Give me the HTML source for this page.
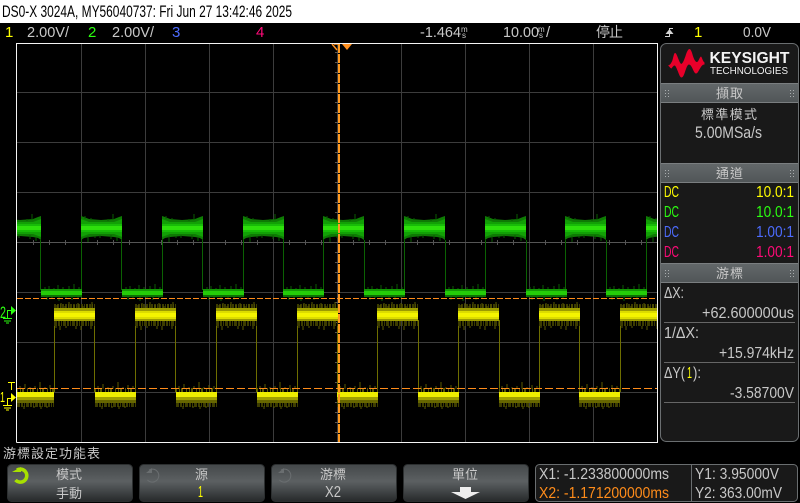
<!DOCTYPE html>
<html><head><meta charset="utf-8"><style>
html,body{margin:0;padding:0;background:#000;width:800px;height:503px;overflow:hidden}
svg{display:block}
text{font-family:"Liberation Sans","WenQuanYi Zen Hei","Noto Sans CJK TC",sans-serif;fill:#c8c8c8}
.cjk{font-family:"WenQuanYi Zen Hei","Noto Sans CJK TC",sans-serif}
</style></head><body>
<svg width="800" height="503" viewBox="0 0 800 503" xmlns="http://www.w3.org/2000/svg">
<defs>
<linearGradient id="hd" x1="0" y1="0" x2="0" y2="1"><stop offset="0" stop-color="#63686a"/><stop offset="1" stop-color="#505557"/></linearGradient>
<linearGradient id="btn" x1="0" y1="0" x2="0" y2="1"><stop offset="0" stop-color="#44484a"/><stop offset=".45" stop-color="#5c6062"/><stop offset=".62" stop-color="#4c5052"/><stop offset="1" stop-color="#26292a"/></linearGradient>
<g id="g2h">
<path d="M0 -12L3 -11L8 -9L20 -8L33 -9L38 -11L41 -12V12L38 10L33 9L20 8L8 9L3 10L0 12Z" fill="#0e7a04"/>
<path d="M0 -9L8 -6L20 -6L33 -6L41 -9V9L33 6L20 6L8 6L0 9Z" fill="#12a006"/>
<path d="M0 -4H41V4H0Z" fill="#18bc08"/>
<rect x="0" y="-2" width="41" height="4" fill="#2ee00c"/>
<path d="M4 -9V-12M10 -8V-10M27 -7V-9M32 -8V-14M7 8V14M14 8V10M19 7V10M30 7V11M36 9V13" stroke="#0a5c02" stroke-width="1"/>
</g>
<g id="g2l">
<rect x="0" y="-2" width="41" height="2" fill="#129604"/>
<rect x="0" y="0" width="41" height="4" fill="#24cc08"/>
<rect x="0" y="4" width="41" height="2" fill="#0c7003"/>
<path d="M4 -2V-4M8 -2V-5M13 -2V-3M17 -2V-6M22 -2V-4M28 -2V-5M33 -2V-7M38 -2V-4M6 6V9M11 6V8M18 6V10M25 6V8M31 6V9M37 6V7" stroke="#0b5a03" stroke-width="1"/>
</g>
<g id="y1h">
<path d="M0 -7H41" stroke="#3c3c00" stroke-width="4" stroke-dasharray="2 1 2 1 1 1"/>
<path d="M0 10H41" stroke="#3c3c00" stroke-width="6" stroke-dasharray="3 1 2 1 1 1"/>
<rect x="0" y="-5" width="41" height="13" fill="#9c9c00"/>
<rect x="0" y="-2" width="41" height="8" fill="#dcdc00"/>
<rect x="0" y="0" width="41" height="4" fill="#f4f400"/>
<path d="M3 -5V-8M7 -5V-10M11 -5V-7M15 -5V-11M20 -5V-8M24 -5V-10M29 -5V-7M33 -5V-9M38 -5V-11M2 13V15M6 13V17M12 13V15M22 13V16M27 13V17M37 13V16" stroke="#5a5a00" stroke-width="1"/>
</g>
<g id="y1l">
<path d="M0 -2H41" stroke="#5a5a00" stroke-width="4" stroke-dasharray="1 2 1 1 2 3"/>
<rect x="0" y="0" width="41" height="5" fill="#eeee00"/>
<rect x="0" y="5" width="41" height="3" fill="#a0a000"/>
<rect x="0" y="8" width="41" height="3" fill="#666600"/>
<path d="M0 13H41" stroke="#3e3e00" stroke-width="4" stroke-dasharray="3 1 2 1 1 1"/>
<path d="M3 -3V-6M8 -3V-8M13 -3V-5M18 -3V-6M23 -3V-10M28 -3V-5M33 -3V-7M38 -3V-6M7 14V17M17 14V16M24 14V17M30 14V16" stroke="#5a5a00" stroke-width="1"/>
</g>
</defs>

<rect width="800" height="503" fill="#000"/>
<rect width="800" height="23" fill="#fff"/>
<text x="2" y="17" font-size="17" textLength="290" lengthAdjust="spacingAndGlyphs" style="fill:#000">DS0-X 3024A, MY56040737: Fri Jun 27 13:42:46 2025</text>

<!-- status row -->
<g font-size="15">
<text x="5" y="37" style="fill:#ffff00">1</text>
<text x="27" y="37" textLength="42" lengthAdjust="spacingAndGlyphs">2.00V/</text>
<text x="88" y="37" style="fill:#2cff10">2</text>
<text x="112" y="37" textLength="42" lengthAdjust="spacingAndGlyphs">2.00V/</text>
<text x="172" y="37" style="fill:#4d6cff">3</text>
<text x="256" y="37" style="fill:#ff0a78">4</text>
<text x="420" y="37" textLength="41" lengthAdjust="spacingAndGlyphs">-1.464</text>
<text x="503" y="37" textLength="36" lengthAdjust="spacingAndGlyphs">10.00</text>
<text x="546" y="37">/</text>
<text x="743" y="37" textLength="28" lengthAdjust="spacingAndGlyphs">0.0V</text>
<text x="694" y="37" style="fill:#ffff00">1</text>
<text class="cjk" x="596" y="37" font-size="14" textLength="27">停止</text>
</g>
<g font-size="8">
<text x="461" y="32">m</text><text x="462" y="38">s</text>
<text x="538" y="32">m</text><text x="539" y="38">s</text>
</g>
<path d="M665 36.500H669.500V28.500H673" stroke="#d4d4d4" stroke-width="1" fill="none"/>
<path d="M669.500 29L673.500 34H665.500Z" fill="#d4d4d4"/>

<!-- graticule -->
<g stroke="#3c3c3c" stroke-width="1" shape-rendering="crispEdges">
<path d="M81.500 44V442M145.500 44V442M209.500 44V442M273.500 44V442M337.500 44V442M401.500 44V442M465.500 44V442M529.500 44V442M593.500 44V442"/>
<path d="M17 92.500H657M17 142.500H657M17 192.500H657M17 292.500H657M17 342.500H657M17 392.500H657"/>
<path stroke="#555" d="M17 242.500H657"/>
<path stroke="#555" d="M33.500 240V245M49.500 240V245M65.500 240V245M97.500 240V245M113.500 240V245M129.500 240V245M161.500 240V245M177.500 240V245M193.500 240V245M225.500 240V245M241.500 240V245M257.500 240V245M289.500 240V245M305.500 240V245M321.500 240V245M353.500 240V245M369.500 240V245M385.500 240V245M417.500 240V245M433.500 240V245M449.500 240V245M481.500 240V245M497.500 240V245M513.500 240V245M545.500 240V245M561.500 240V245M577.500 240V245M609.500 240V245M625.500 240V245M641.500 240V245"/>
<path stroke="#555" d="M335 52.500H340M335 62.500H340M335 72.500H340M335 82.500H340M335 102.500H340M335 112.500H340M335 122.500H340M335 132.500H340M335 152.500H340M335 162.500H340M335 172.500H340M335 182.500H340M335 202.500H340M335 212.500H340M335 222.500H340M335 232.500H340M335 252.500H340M335 262.500H340M335 272.500H340M335 282.500H340M335 302.500H340M335 312.500H340M335 322.500H340M335 332.500H340M335 352.500H340M335 362.500H340M335 372.500H340M335 382.500H340M335 402.500H340M335 412.500H340M335 422.500H340M335 432.500H340"/>
</g>

<!-- ch2 edges -->
<path d="M40.500 240V290M81.500 290V240M121.500 240V290M162.500 290V240M202.500 240V290M243.500 290V240M283.500 240V290M323.500 290V240M364.500 240V290M404.500 290V240M445.500 240V290M485.500 290V240M526.500 240V290M565.500 290V240M606.500 240V290M646.500 290V240" stroke="#0b6203" stroke-width="1"/>
<!-- ch2 -->
<svg x="17" y="200" width="24" height="60" viewBox="17 0 24 60"><use href="#g2h" x="0" y="28"/></svg>
<use href="#g2h" x="81" y="228"/><use href="#g2h" x="162" y="228"/><use href="#g2h" x="243" y="228"/><use href="#g2h" x="323" y="228"/><use href="#g2h" x="404" y="228"/><use href="#g2h" x="485" y="228"/><use href="#g2h" x="565" y="228"/>
<svg x="646" y="200" width="11" height="60" viewBox="0 0 11 60"><use href="#g2h" x="0" y="28"/></svg>
<use href="#g2l" x="41" y="291"/><use href="#g2l" x="122" y="291" /><use href="#g2l" x="203" y="291"/><use href="#g2l" x="283" y="291"/><use href="#g2l" x="364" y="291"/><use href="#g2l" x="445" y="291"/><use href="#g2l" x="526" y="291"/><use href="#g2l" x="606" y="291"/>

<!-- ch1 edges -->
<path d="M54.500 320V392M94.500 320V392M135.500 320V392M175.500 320V392M216.500 320V392M256.500 320V392M297.500 320V392M337.500 320V392M377.500 320V392M418.500 320V392M458.500 320V392M499.500 320V392M539.500 320V392M579.500 320V392M620.500 320V392" stroke="#6e6e00" stroke-width="1"/>
<!-- ch1 -->
<use href="#y1h" x="54" y="313"/><use href="#y1h" x="135" y="313"/><use href="#y1h" x="216" y="313"/><use href="#y1h" x="297" y="313"/><use href="#y1h" x="377" y="313"/><use href="#y1h" x="458" y="313"/><use href="#y1h" x="539" y="313"/>
<svg x="620" y="295" width="37" height="40" viewBox="0 0 37 40"><use href="#y1h" x="0" y="18"/></svg>
<svg x="17" y="375" width="37" height="40" viewBox="0 0 37 40"><use href="#y1l" x="0" y="17"/></svg>
<use href="#y1l" x="95" y="392"/><use href="#y1l" x="176" y="392"/><use href="#y1l" x="257" y="392"/><use href="#y1l" x="337" y="392"/><use href="#y1l" x="418" y="392"/><use href="#y1l" x="499" y="392"/><use href="#y1l" x="579" y="392"/>

<!-- cursors -->
<path d="M17 298.500H657" stroke="#ff8c1a" stroke-width="1" stroke-dasharray="6 2" shape-rendering="crispEdges"/>
<path d="M17 388.500H657" stroke="#ff8c1a" stroke-width="1" stroke-dasharray="8 3" shape-rendering="crispEdges"/>
<path d="M339 44V442" stroke="#ff9a20" stroke-width="2" stroke-dasharray="9 1" shape-rendering="crispEdges"/>
<path d="M342 44H352L347 50Z" fill="#ff9020"/>
<path d="M332 44L337 50M334 44H338" stroke="#ff9020" stroke-width="1.500"/>

<!-- border -->
<path d="M16.500 442.500V43.500H657.500V442.500H16.500" fill="none" stroke="#f4f4f4" stroke-width="1" shape-rendering="crispEdges"/>

<!-- ground markers -->
<text x="0" y="318" font-size="17" textLength="6" lengthAdjust="spacingAndGlyphs" style="fill:#2cff10">2</text>
<path d="M11 306L16 310.500L11 315Z" fill="#2cff10"/>
<path d="M7.500 318V310.500H11M3 318.500H12M4 321H11M6 323H9" stroke="#2cff10" stroke-width="1" fill="none" shape-rendering="crispEdges"/>
<text x="0" y="402" font-size="15" textLength="5" lengthAdjust="spacingAndGlyphs" style="fill:#ffff00">1</text>
<path d="M11 393L16 397.500L11 402Z" fill="#ffff00"/>
<path d="M7.500 405V398.500H11M3 405.500H12M4 408H11M6 410H9" stroke="#ffff00" stroke-width="1" fill="none" shape-rendering="crispEdges"/>
<path d="M8 382.500H15M11.500 383V390" stroke="#ffff00" stroke-width="1" shape-rendering="crispEdges"/>

<!-- right panel -->
<rect x="660.500" y="43.500" width="138" height="398" rx="6" fill="#191919" stroke="#6a6e70"/>
<g shape-rendering="crispEdges">
<rect x="661" y="83" width="137" height="20" fill="url(#hd)"/><path d="M661 83.500H798M661 102.500H798" stroke="#7a7e80"/>
<rect x="661" y="163" width="137" height="20" fill="url(#hd)"/><path d="M661 163.500H798M661 182.500H798" stroke="#7a7e80"/>
<rect x="661" y="263" width="137" height="20" fill="url(#hd)"/><path d="M661 263.500H798M661 282.500H798" stroke="#7a7e80"/>
<path d="M664 322.500H795M664 362.500H795M664 402.500H795" stroke="#666"/>
</g>
<g fill="#a8acae" shape-rendering="crispEdges">
<path d="M665 90h1v1h-1zM668 90h1v1h-1zM665 93h1v1h-1zM668 93h1v1h-1zM665 96h1v1h-1zM668 96h1v1h-1zM790 90h1v1h-1zM793 90h1v1h-1zM790 93h1v1h-1zM793 93h1v1h-1zM790 96h1v1h-1zM793 96h1v1h-1z"/>
<path d="M665 170h1v1h-1zM668 170h1v1h-1zM665 173h1v1h-1zM668 173h1v1h-1zM665 176h1v1h-1zM668 176h1v1h-1zM790 170h1v1h-1zM793 170h1v1h-1zM790 173h1v1h-1zM793 173h1v1h-1zM790 176h1v1h-1zM793 176h1v1h-1z"/>
<path d="M665 270h1v1h-1zM668 270h1v1h-1zM665 273h1v1h-1zM668 273h1v1h-1zM665 276h1v1h-1zM668 276h1v1h-1zM790 270h1v1h-1zM793 270h1v1h-1zM790 273h1v1h-1zM793 273h1v1h-1zM790 276h1v1h-1zM793 276h1v1h-1z"/>
</g>
<path d="M668 65.500C670 65 671.500 63 672.500 60C673.500 56.500 674 53 675 53C676.500 53 677.500 57 679 60.500C680 63 681 64.500 682 63.500C683.500 62 685 57.500 686.500 53C687.500 50.500 688.500 49 689.500 49C690.500 49 691.500 51 692.500 54.500C693.500 58 695 62 697 62C698.500 62 699.500 57 701 56.500C702 57 702.500 61 704.500 62.500V64.500C702.500 64.500 701.500 66 700 68.500C698.500 71 697.500 73.500 696 73.500C694.500 73.500 693.500 70.500 692 67.500C691 65.500 690 64.500 689 64.500C688 64.500 687 66 686 69C684.500 73 683.500 77.500 681.500 77.500C680 77.500 679 74 677.500 70.500C676.500 68 675.500 65.500 674.500 65.500C673.500 65.500 672.500 67 671.500 68.500C670.500 68.500 669.500 66.500 668 65.500Z" fill="#e8002a"/>
<text x="709.500" y="63" font-size="16" font-weight="bold" textLength="80" lengthAdjust="spacingAndGlyphs" style="fill:#f4f4f4">KEYSIGHT</text>
<text x="710" y="74" font-size="10" textLength="78" lengthAdjust="spacingAndGlyphs" style="fill:#f0f0f0">TECHNOLOGIES</text>

<g font-size="13">
<text class="cjk" x="716" y="98" textLength="27">擷取</text>
<text class="cjk" x="701" y="119" textLength="56">標準模式</text>
<text class="cjk" x="716" y="178" textLength="27">通道</text>
<text class="cjk" x="716" y="278" textLength="27">游標</text>
</g>
<text x="695" y="138" font-size="17" textLength="67" lengthAdjust="spacingAndGlyphs">5.00MSa/s</text>
<g font-size="16">
<text x="664" y="197" textLength="15" lengthAdjust="spacingAndGlyphs" style="fill:#ffff00">DC</text>
<text x="664" y="217" textLength="15" lengthAdjust="spacingAndGlyphs" style="fill:#2cff10">DC</text>
<text x="664" y="237" textLength="15" lengthAdjust="spacingAndGlyphs" style="fill:#4d6cff">DC</text>
<text x="664" y="257" textLength="15" lengthAdjust="spacingAndGlyphs" style="fill:#ff0a78">DC</text>
<text x="756" y="197" textLength="38" lengthAdjust="spacingAndGlyphs" style="fill:#ffff00">10.0:1</text>
<text x="756" y="217" textLength="38" lengthAdjust="spacingAndGlyphs" style="fill:#2cff10">10.0:1</text>
<text x="756" y="237" textLength="38" lengthAdjust="spacingAndGlyphs" style="fill:#4d6cff">1.00:1</text>
<text x="756" y="257" textLength="38" lengthAdjust="spacingAndGlyphs" style="fill:#ff0a78">1.00:1</text>
<text x="664" y="298" textLength="20" lengthAdjust="spacingAndGlyphs">ΔX:</text>
<text x="702" y="318" textLength="92" lengthAdjust="spacingAndGlyphs">+62.600000us</text>
<text x="664" y="338" textLength="35" lengthAdjust="spacingAndGlyphs">1/ΔX:</text>
<text x="719" y="358" textLength="75" lengthAdjust="spacingAndGlyphs">+15.974kHz</text>
<text x="664" y="378" textLength="21" lengthAdjust="spacingAndGlyphs">ΔY(</text>
<text x="687" y="378" style="fill:#ffff00" textLength="5" lengthAdjust="spacingAndGlyphs">1</text>
<text x="693" y="378" textLength="8" lengthAdjust="spacingAndGlyphs">):</text>
<text x="730" y="398" textLength="64" lengthAdjust="spacingAndGlyphs">-3.58700V</text>
</g>

<!-- softkey row -->
<text class="cjk" x="3" y="458" font-size="13" textLength="97">游標設定功能表</text>
<rect x="7.500" y="464.500" width="125" height="37" rx="4" fill="url(#btn)" stroke="#2c2f30"/>
<rect x="139.500" y="464.500" width="125" height="37" rx="4" fill="url(#btn)" stroke="#2c2f30"/>
<rect x="271.500" y="464.500" width="125" height="37" rx="4" fill="url(#btn)" stroke="#2c2f30"/>
<rect x="403.500" y="464.500" width="125" height="37" rx="4" fill="url(#btn)" stroke="#2c2f30"/>
<g>
<text class="cjk" x="56" y="479" font-size="13" textLength="26">模式</text>
<text class="cjk" x="56" y="498" font-size="13" textLength="26">手動</text>
<text class="cjk" x="195" y="479" font-size="13" textLength="13">源</text>
<text x="198" y="497" font-size="16" textLength="5" lengthAdjust="spacingAndGlyphs" style="fill:#ffff00">1</text>
<text class="cjk" x="320" y="479" font-size="13" textLength="26">游標</text>
<text x="325" y="497" font-size="16" textLength="16" lengthAdjust="spacingAndGlyphs">X2</text>
<text class="cjk" x="452" y="479" font-size="13" textLength="26">單位</text>
</g>
<path d="M17 470A6.500 6.500 0 1 1 15.500 480" fill="none" stroke="#a8e000" stroke-width="3.500"/>
<path d="M12 472H21V467Z" fill="#a8e000"/>
<path d="M149 470A6.500 6.500 0 1 1 147.500 480" fill="none" stroke="#6a6e70" stroke-width="1"/>
<path d="M146 473H152V468Z" fill="#6a6e70"/>
<path d="M281 470A6.500 6.500 0 1 1 279.500 480" fill="none" stroke="#6a6e70" stroke-width="1"/>
<path d="M278 473H284V468Z" fill="#6a6e70"/>
<path d="M460 487H471V492H480L465.500 499L451 492H460Z" fill="#eee"/>

<!-- readout -->
<rect x="535.500" y="464.500" width="262" height="37" rx="4" fill="#191919" stroke="#6a6e70"/>
<path d="M691.500 465V501" stroke="#6a6e70" shape-rendering="crispEdges"/>
<g font-size="16">
<text x="539" y="479" textLength="130" lengthAdjust="spacingAndGlyphs">X1: -1.233800000ms</text>
<text x="539" y="498" textLength="130" lengthAdjust="spacingAndGlyphs" style="fill:#ff8c1a">X2: -1.171200000ms</text>
<text x="695" y="479" textLength="84" lengthAdjust="spacingAndGlyphs">Y1: 3.95000V</text>
<text x="695" y="498" textLength="87" lengthAdjust="spacingAndGlyphs">Y2: 363.00mV</text>
</g>
</svg>
</body></html>
